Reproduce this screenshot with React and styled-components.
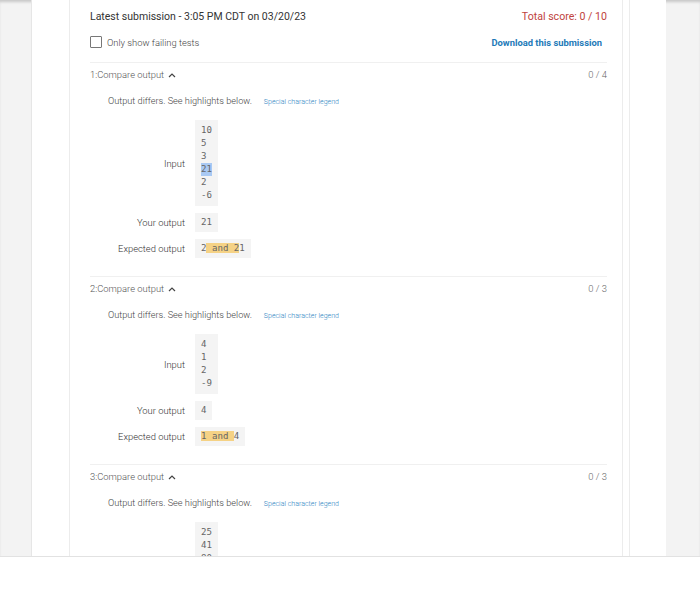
import React from "react";
import styled, { createGlobalStyle } from "styled-components";

const GlobalStyle = createGlobalStyle`
  body {
    margin: 0;
    background: #fff;
    font-family: Roboto, "Liberation Sans", sans-serif;
  }
`;

const tests = [
  {
    id: 1,
    score: "0 / 4",
    input: ["10", "5", "3", "21", "2", "-6"],
    marked: 3,
    yours: "21",
    expected: [
      { t: "2" },
      { t: " and 2", hl: true },
      { t: "1" },
    ],
  },
  {
    id: 2,
    score: "0 / 3",
    input: ["4", "1", "2", "-9"],
    yours: "4",
    expected: [{ t: "1 and ", hl: true }, { t: "4" }],
  },
  {
    id: 3,
    score: "0 / 3",
    input: ["25", "41", "80", "12", "7", "-3", "19", "8"],
    yours: "25",
    expected: [{ t: "25" }],
  },
];

const Viewport = styled.div`
  height: 556px;
  overflow: hidden;
  background: #f3f3f3;
  border-bottom: 1px solid #e2e2e2;
  padding-left: 31px;
  box-shadow: inset 0 3px 3px -1px rgba(0, 0, 0, 0.18);
`;

const Column = styled.div`
  width: 635px;
  height: 100%;
  background: #fff;
  border-left: 1px solid #e6e6e6;
  padding-left: 37px;
  box-sizing: border-box;
  display: flex;
`;

const Card = styled.div`
  width: 554px;
  height: 100%;
  border-left: 1px solid #ececec;
  border-right: 1px solid #ececec;
  padding: 6px 15px 0 20px;
  box-sizing: border-box;
`;

const Gutter = styled.div`
  width: 6px;
  border-right: 1px solid #ececec;
`;

const HeadRow = styled.div`
  display: flex;
  justify-content: space-between;
  align-items: center;
  height: ${(p) => p.$h}px;
  padding-right: ${(p) => p.$pr || 0}px;
  margin-bottom: ${(p) => p.$mb || 0}px;
`;

const Title = styled.div`
  font-size: 10.5px;
  color: #333;
`;

const Total = styled.div`
  font-size: 10.6px;
  color: #c0433d;
`;

const CheckLabel = styled.label`
  display: flex;
  align-items: center;
  gap: 5px;
  font-size: 9.4px;
  font-weight: 300;
  color: #444;
`;

const Box = styled.span`
  width: 10px;
  height: 10px;
  border: 1px solid #777;
  border-radius: 1px;
`;

const Download = styled.a`
  font-size: 9.4px;
  font-weight: 700;
  color: #1d7ab8;
`;

const Section = styled.div`
  border-top: 1px solid #f0f0f0;
  padding-bottom: 18px;
`;

const SecHead = styled.div`
  display: flex;
  justify-content: space-between;
  align-items: center;
  height: 23px;
  font-size: 9.4px;
  font-weight: 300;
  color: #555;
`;

const SecName = styled.div`
  display: flex;
  align-items: center;
  gap: 4px;
`;

const Score = styled.div`
  font-size: 9.4px;
  color: #666;
`;

const Differs = styled.div`
  display: flex;
  align-items: baseline;
  gap: 12px;
  margin: 9px 0 0 18px;
  height: 16px;
  font-size: 9.2px;
  font-weight: 300;
  color: #444;
`;

const Legend = styled.a`
  font-size: 7px;
  color: #2b83c2;
`;

const Results = styled.div`
  display: grid;
  grid-template-columns: 95px auto;
  column-gap: 10px;
  row-gap: 7px;
  margin-top: 9px;
  align-items: center;
`;

const Label = styled.div`
  text-align: right;
  font-size: 9.4px;
  font-weight: 300;
  color: #333;
`;

const Pre = styled.div`
  justify-self: start;
  background: #f4f4f4;
  padding: ${(p) => (p.$tall ? "4px" : "3px")} 6px;
  font-family: "DejaVu Sans Mono", "Liberation Mono", monospace;
  font-size: 9.1px;
  line-height: 13px;
  color: #666;
  white-space: pre;
`;

const Line = styled.div`
  display: table;
  background: ${(p) => (p.$mark ? "#a9c9f3" : "transparent")};
`;

const Mark = styled.span`
  background: ${(p) => (p.$on ? "#f5d285" : "transparent")};
`;

const Caret = () => (
  <svg width="8" height="6" viewBox="0 0 8 6">
    <path d="M1 5 L4 2 L7 5" fill="none" stroke="#444" strokeWidth="1.2" />
  </svg>
);

const TestCase = ({ test }) => (
  <Section>
    <SecHead>
      <SecName>
        {test.id}:Compare output <Caret />
      </SecName>
      <Score>{test.score}</Score>
    </SecHead>
    <Differs>
      Output differs. See highlights below.
      <Legend>Special character legend</Legend>
    </Differs>
    <Results>
      <Label>Input</Label>
      <Pre $tall>
        {test.input.map((v, i) => (
          <Line key={i} $mark={i === test.marked}>
            {v}
          </Line>
        ))}
      </Pre>
      <Label>Your output</Label>
      <Pre>{test.yours}</Pre>
      <Label>Expected output</Label>
      <Pre>
        {test.expected.map((s, i) => (
          <Mark key={i} $on={s.hl}>
            {s.t}
          </Mark>
        ))}
      </Pre>
    </Results>
  </Section>
);

export default function App() {
  return (
    <>
      <GlobalStyle />
      <Viewport>
        <Column>
          <Card>
            <HeadRow $h={20}>
              <Title>Latest submission - 3:05 PM CDT on 03/20/23</Title>
              <Total>Total score: 0 / 10</Total>
            </HeadRow>
            <HeadRow $h={32} $pr={5} $mb={4}>
              <CheckLabel>
                <Box />
                Only show failing tests
              </CheckLabel>
              <Download>Download this submission</Download>
            </HeadRow>
            {tests.map((t) => (
              <TestCase key={t.id} test={t} />
            ))}
          </Card>
          <Gutter />
        </Column>
      </Viewport>
    </>
  );
}
